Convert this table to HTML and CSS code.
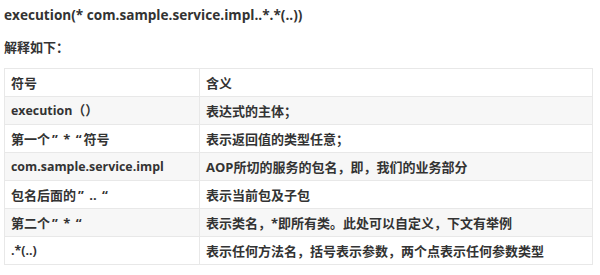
FILE: index.html
```html
<!DOCTYPE html>
<html lang="zh">
<head>
<meta charset="utf-8">
<link rel="stylesheet" href="styles.css">
</head>
<body>
<p class="expr">execution(* com.sample.service.impl..*.*(..))</p>
<p class="label">解释如下：</p>
<table class="tbl">
  <tr><td class="c1">符号</td><td>含义</td></tr>
  <tr class="alt"><td class="c1"><span class="lat">execution</span>（）</td><td>表达式的主体；</td></tr>
  <tr><td class="c1">第一个<span class="q">”</span> * <span class="q">“</span>符号</td><td>表示返回值的类型任意；</td></tr>
  <tr class="alt"><td class="c1"><span class="lat">com.sample.service.impl</span></td><td>AOP所切的服务的包名，即，我们的业务部分</td></tr>
  <tr><td class="c1">包名后面的<span class="q">”</span> .. <span class="q">“</span></td><td>表示当前包及子包</td></tr>
  <tr class="alt"><td class="c1">第二个<span class="q">”</span> * <span class="q">“</span></td><td>表示类名，*即所有类。此处可以自定义，下文有举例</td></tr>
  <tr><td class="c1"><span class="lat">.*(..)</span></td><td>表示任何方法名，括号表示参数，两个点表示任何参数类型</td></tr>
</table>
</body>
</html>
```
FILE: styles.css
```css
html, body {
  margin: 0;
  padding: 0;
  background: #fff;
}
body {
  padding: 0 4px;
  font-family: "Open Sans", "Noto Sans CJK SC", sans-serif;
  font-weight: bold;
  color: #333;
}
.expr {
  margin: 0;
  padding-top: 5px;
  font-size: 13.6px;
  line-height: 20px;
}
.label {
  margin: 0;
  padding-top: 12px;
  font-size: 13px;
  line-height: 20px;
}
.tbl {
  margin-top: 11px;
  width: 589px;
  border-collapse: collapse;
  font-size: 13px;
}
.tbl td {
  border: 1px solid #e8e8e8;
  height: 28px;
  padding: 0 6px;
  box-sizing: border-box;
  line-height: 18px;
}
.tbl td.c1 {
  width: 195px;
}
.tbl tr.alt td {
  background: #f7f7f7;
}
.lat {
  font-size: 12.4px;
}
.q {
  margin: 0 2px;
}
```
